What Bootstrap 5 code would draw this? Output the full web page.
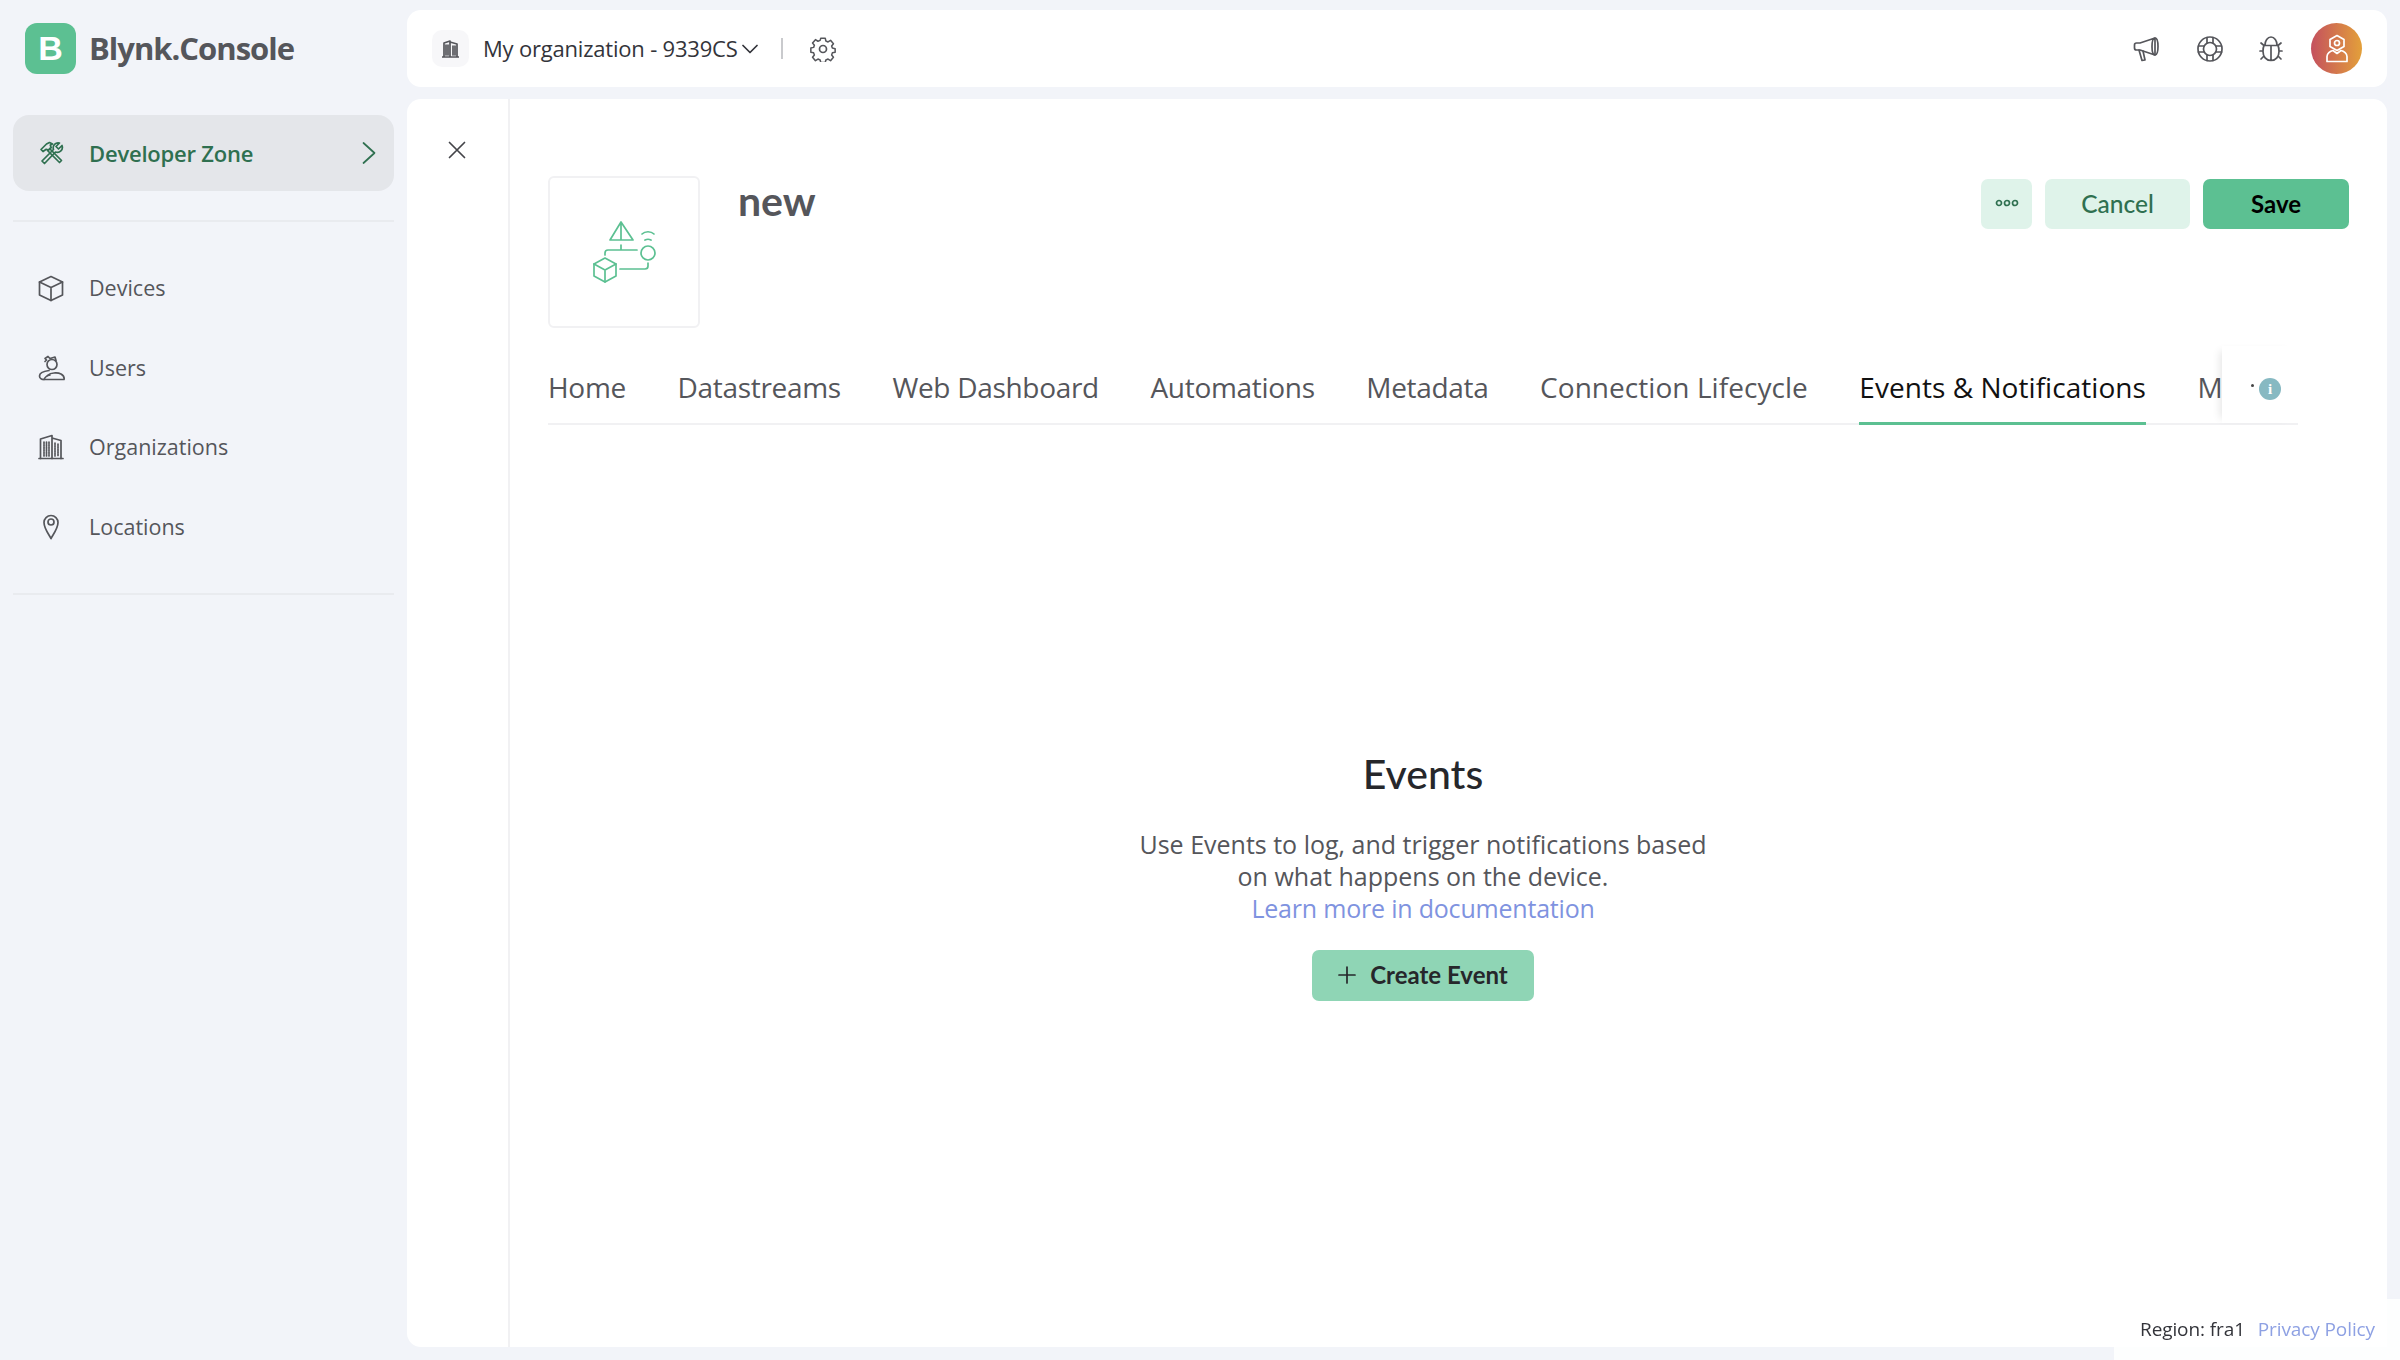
<!DOCTYPE html>
<html lang="en">
<head>
    <meta charset="UTF-8">
    <meta name="viewport" content="width=device-width, initial-scale=1.0">
    <title>Blynk.Console</title>
    <link href="https://cdn.jsdelivr.net/npm/bootstrap@5.3.3/dist/css/bootstrap.min.css" rel="stylesheet">
    <style>
        body {
            background: #f2f4f9;
            font-family: "Open Sans", sans-serif;
            color: #55565b;
            height: 1360px;
            overflow: hidden;
        }
        svg { display: block; fill: none; stroke: currentColor; stroke-width: 1.7; stroke-linecap: round; stroke-linejoin: round; }

        .side-col { width: 407px; flex: none; padding: 23px 13px 0 13px; }
        .brand { height: 51px; margin-left: 12px; margin-bottom: 41px; gap: 13px; }
        .brand-mark { width: 51px; height: 51px; border-radius: 12px; background: #5cc092; color: #fff; font: 700 34px "Liberation Sans", sans-serif; }
        .brand-name { font-size: 31px; font-weight: 700; color: #55565b; letter-spacing: -1px; }
        .dev-row { height: 76px; border-radius: 16px; background: #e4e6ea; color: #2f7050; font-size: 22px; font-weight: 600; padding: 0 18px 0 25px; margin-bottom: 29px; letter-spacing: -.2px; }
        .side-rule { height: 2px; background: #e9ebef; }
        .side-item { height: 79.5px; padding-left: 25px; font-size: 21.5px; color: #55565b; }
        .side-ico { width: 51px; flex: none; }
        .side-list { padding-top: 26.5px; padding-bottom: 26.5px; }

        .main-col { flex: 1; padding: 10px 13px 13px 0; min-width: 0; }
        .top-strip { height: 77px; background: #fff; border-radius: 14px; margin-bottom: 12px; padding: 0 25px; }
        .org-chip { width: 37px; height: 37px; border-radius: 10px; background: #f7f7f9; color: #55565b; }
        .org-name { font-size: 22px; color: #33343a; margin-left: 14px; letter-spacing: -.2px; }
        .org-sep { width: 2px; height: 21px; background: #c9cacd; margin: 0 27px 0 23px; }
        .top-ico { color: #55565b; }

        .panel { height: 1248px; background: #fff; border-radius: 14px 14px 0 14px; }
        .close-col { width: 103px; flex: none; border-right: 2px solid #f1f1f3; padding: 42px 0 0 41px; color: #44454a; }
        .panel-body { flex: 1; padding: 77px 89px 0 38px; min-width: 0; }
        .thumb { width: 152px; height: 152px; border: 2px solid #f1f1f3; border-radius: 6px; flex: none; color: #5cc092; }
        .prod-name { margin-left: 38px; font: 700 41px "Lato", sans-serif; color: #55565b; line-height: 1; padding-top: 4px; }
        .head-actions { gap: 13px; margin-right: -51px; margin-top: 3px; }
        .act-btn { height: 50px; border-radius: 7px; border: 0; font: 500 24.5px "Lato", sans-serif; padding: 0 0 2px; width: 146px; }
        .act-more { width: 51px; background: #dff3ea; color: #2f7050; }
        .act-cancel { width: 145px; background: #dff3ea; color: #2f7050; }
        .act-save { background: #5cc092; color: #000; font-weight: 700; font-size: 24px; }

        .tab-strip { position: relative; height: 96px; box-shadow: inset 0 -2px 0 #f1f1f3; gap: 51.5px; overflow: hidden; margin-top: 1px; }
        .tab-link { font-size: 28px; color: #55565b; white-space: nowrap; height: 96px; padding-top: 39px; text-decoration: none; line-height: 38px; letter-spacing: -.3px; }
        .tab-link.tab-wide { letter-spacing: .05px; }
        .tab-link.on { color: #111; border-bottom: 3px solid #5cc092; }
        .tab-more { position: absolute; left: 1674px; top: 17px; bottom: 2px; width: 76px; background: #fff; box-shadow: -7px 0 8px -5px rgba(0,0,0,.1); }
        .tab-dot { position: absolute; left: 29px; top: 38px; width: 3px; height: 3px; border-radius: 50%; background: #444; }
        .tab-info { position: absolute; left: 37px; top: 32px; width: 22px; height: 22px; border-radius: 50%; background: #87b9c2; color: #fff; font: 700 15px/22px "Liberation Serif", serif; text-align: center; }

        .empty-box { margin-top: 324px; text-align: center; }
        .empty-title { font: 500 41px/50px "Lato", sans-serif; color: #26272b; margin-bottom: 29px; }
        .empty-text { font-size: 25px; line-height: 32px; color: #55565b; margin-bottom: 25.5px; }
        .empty-text a { color: #7f93e0; text-decoration: none; letter-spacing: -.2px; }
        .create-btn { width: 222px; height: 51px; background: #8fd5b5; color: #26272b; border: 0; border-radius: 7px; font: 700 24px "Lato", sans-serif; gap: 14px; padding-bottom: 2px; }

        .foot-note { position: fixed; right: 0; bottom: 0; width: 286px; height: 61px; background: rgba(255,255,255,.85); font-size: 19px; padding: 10px 26px 0 26px; color: #33343a; letter-spacing: -.1px; line-height: 40px; white-space: nowrap; }
        .foot-note a { color: #8ea1e3; text-decoration: none; margin-left: 8px; }
    </style>
</head>
<body class="d-flex">

    <aside class="side-col">
        <div class="brand d-flex align-items-center">
            <div class="brand-mark d-flex align-items-center justify-content-center">B</div>
            <span class="brand-name">Blynk.Console</span>
        </div>

        <div class="dev-row d-flex align-items-center">
            <div class="side-ico">
                <svg width="26" height="24" viewBox="0 0 26 24"><path d="M3 8.500 8.500 3l3-1.500 3 1.600-2.200 1 .9 2.600-2.600 2.400-2.400-.8L5 10.500Z"/><path d="M9.500 9.500 21.500 21.500 23.500 19.500 11.500 7.500"/><path d="M24 4.500 20.500 8 18 5.500 21.500 2a5 5 0 0 0-6 6.500L4 20l2.500 2.500L17.500 11a5 5 0 0 0 6.500-6.500Z"/></svg>
            </div>
            <span class="flex-grow-1">Developer Zone</span>
            <svg width="14" height="24" viewBox="0 0 14 24"><path d="m1.500 2 11 10-11 10"/></svg>
        </div>

        <div class="side-rule"></div>

        <div class="side-list">
            <div class="side-item d-flex align-items-center">
                <div class="side-ico"><svg width="26" height="27" viewBox="0 0 26 27"><path d="M13 1.500 24.500 7v13L13 25.500 1.500 20V7Z"/><path d="M1.500 7 13 12.500 24.500 7M13 12.500v13"/></svg></div>
                <span>Devices</span>
            </div>
            <div class="side-item d-flex align-items-center">
                <div class="side-ico"><svg width="27" height="26" viewBox="0 0 27 26"><circle cx="14" cy="9.500" r="5"/><path d="M7 6.500 8.500 5 7 3.500 10 1.500l2 2 5-1.500 1 3.500"/><path d="M6 24.500h20c.5-2-.5-4-3-5.500-3-1.500-5-1-7-1-3 0-5 1-6.500 2.500"/><path d="M11 15.500c-4 .5-9.500 2-9.500 5.500 0 2 2 3.500 4.500 3.500 1-2.500 3-4 6-4.500"/></svg></div>
                <span>Users</span>
            </div>
            <div class="side-item d-flex align-items-center">
                <div class="side-ico"><svg width="26" height="26" viewBox="0 0 26 26"><path d="M1 24.500h24"/><path d="M2.500 24.500V5L14 1.500V24.500M14 4l9 2.500v18"/><path d="M6 8v14M8.500 8v14M11 8v14M17 9v13M20 10v12" stroke-dasharray="1.500 1"/></svg></div>
                <span>Organizations</span>
            </div>
            <div class="side-item d-flex align-items-center">
                <div class="side-ico"><svg width="26" height="27" viewBox="0 0 26 27"><path d="M13 25.500c-2-4-7-10-7-16a7 7 0 0 1 14 0c0 6-5 12-7 16Z"/><circle cx="13" cy="9" r="3"/></svg></div>
                <span>Locations</span>
            </div>
        </div>

        <div class="side-rule"></div>
    </aside>

    <div class="main-col">
        <div class="top-strip d-flex align-items-center">
            <div class="org-chip d-flex align-items-center justify-content-center">
                <svg width="17" height="18" viewBox="0 0 17 18"><path d="M.5 17h16M2 17V3l6-2v16M8 2l7 2v13M4 5v10M6 5v10M11 6v9M13 6v9"/></svg>
            </div>
            <span class="org-name">My organization - 9339CS</span>
            <svg class="ms-1" width="16" height="10" viewBox="0 0 16 10" style="color:#33343a"><path d="m1 1.500 7 7 7-7"/></svg>
            <div class="org-sep"></div>
            <svg class="top-ico" width="26" height="26" viewBox="0 0 26 26"><circle cx="13" cy="13" r="3.500"/><path d="M10.500 1h5l.7 3.200 2.400 1 2.800-1.800 3.200 3.800-2 2.500.8 2.300 3.100.8v3.800l-3.100.7-.8 2.400 2 2.500-3.200 3.800-2.800-1.800-2.400 1-.7 2.700h-5l-.7-2.700-2.400-1-2.800 1.800-3.200-3.800 2-2.500-.8-2.400-3.100-.7V12l3.100-.8.800-2.300-2-2.500 3.200-3.800 2.800 1.800 2.400-1Z" transform="translate(1.300 1.300) scale(.9)"/></svg>

            <div class="ms-auto d-flex align-items-center">
                <svg class="top-ico" width="26" height="26" viewBox="0 0 26 26" style="margin-right:38px"><path d="M22 2 7 7H3.500a2 2 0 0 0-2 2v3a2 2 0 0 0 2 2H7l15 5Z" /><path d="M22 2c2 0 3 4 3 8.500S24 19 22 19c-2 0-3-4-3-8.500S20 2 22 2ZM6 14l3 10.500 3-.5-2-9"/></svg>
                <svg class="top-ico" width="26" height="26" viewBox="0 0 26 26" style="margin-right:36px"><circle cx="13" cy="13" r="12"/><circle cx="13" cy="13" r="6.500"/><path d="M10 1.500v5.500M16 1.500v5.500M10 19v5.500M16 19v5.500M1.500 10H7M1.500 16H7M19 10h5.500M19 16h5.500"/></svg>
                <svg class="top-ico" width="24" height="26" viewBox="0 0 24 26" style="margin-right:28px"><path d="M6 9c0-4 2.500-8 6-8s6 4 6 8M5 9.500h14c1 2 1 4 1 6 0 5-3 9-8 9s-8-4-8-9c0-2 0-4 1-6ZM12 9.500v15M5 9.500 2 7M19 9.500 22 7M4 15H1M20 15h3M5 20l-3 3M19 20l3 3"/></svg>
                <div class="rounded-circle d-flex align-items-center justify-content-center" style="width:51px;height:51px;background:linear-gradient(90deg,#c4505e,#e3a03a);color:#fff">
                    <svg width="24" height="29" viewBox="0 0 24 29" stroke-width="2"><path d="M12 1.500 19 5.500v7L12 16.500 5 12.500v-7Z"/><circle cx="12" cy="9" r="2.500"/><path d="M8 16.500c-3 .5-6 3-6 6v5h20v-5c0-3-3-5.500-6-6l-4 3Z"/></svg>
                </div>
            </div>
        </div>

        <div class="panel d-flex">
            <div class="close-col">
                <svg width="18" height="18" viewBox="0 0 18 18"><path d="m1.500 1.500 15 15M16.500 1.500l-15 15"/></svg>
            </div>
            <div class="panel-body">
                <div class="d-flex align-items-start">
                    <div class="thumb d-flex align-items-center justify-content-center">
                        <svg width="66" height="64" viewBox="0 0 66 64" stroke-width="2.400"><path d="M30 2 19 20h23ZM30 2v18M30 25v5M14 35v-2a3 3 0 0 1 3-3h29"/><circle cx="57" cy="33" r="7"/><path d="M51 14c3-3 9-3 12 0M54 20c2-1 4-1 6 0"/><path d="M14 38l11 6v12l-11 6-11-6V44Z"/><path d="m3 44 11 6 11-6M14 50v12"/><path d="M29 49h25a3 3 0 0 0 3-3v-3"/></svg>
                    </div>
                    <div class="prod-name">new</div>
                    <div class="head-actions d-flex ms-auto">
                        <button class="act-btn act-more d-flex align-items-center justify-content-center">
                            <svg width="24" height="8" viewBox="0 0 24 8" stroke-width="1.800"><circle cx="4" cy="4" r="2.500"/><circle cx="12" cy="4" r="2.500"/><circle cx="20" cy="4" r="2.500"/></svg>
                        </button>
                        <button class="act-btn act-cancel">Cancel</button>
                        <button class="act-btn act-save">Save</button>
                    </div>
                </div>

                <div class="tab-strip d-flex">
                    <a class="tab-link" href="#">Home</a>
                    <a class="tab-link" href="#">Datastreams</a>
                    <a class="tab-link" href="#">Web Dashboard</a>
                    <a class="tab-link" href="#">Automations</a>
                    <a class="tab-link" href="#">Metadata</a>
                    <a class="tab-link tab-wide" href="#">Connection Lifecycle</a>
                    <a class="tab-link tab-wide on" href="#">Events &amp; Notifications</a>
                    <a class="tab-link" href="#">Mobile Dashboard</a>
                    <div class="tab-more">
                        <span class="tab-dot"></span>
                        <span class="tab-info">i</span>
                    </div>
                </div>

                <div class="empty-box">
                    <h2 class="empty-title">Events</h2>
                    <p class="empty-text">Use Events to log, and trigger notifications based<br>on what happens on the device.<br><a href="#">Learn more in documentation</a></p>
                    <button class="create-btn d-inline-flex align-items-center justify-content-center">
                        <svg width="18" height="18" viewBox="0 0 18 18"><path d="M9 1v16M1 9h16"/></svg>
                        Create Event
                    </button>
                </div>
            </div>
        </div>
    </div>

    <div class="foot-note">Region: fra1 <a href="#">Privacy Policy</a></div>

    <script src="https://cdn.jsdelivr.net/npm/bootstrap@5.3.3/dist/js/bootstrap.bundle.min.js"></script>
</body>
</html>
